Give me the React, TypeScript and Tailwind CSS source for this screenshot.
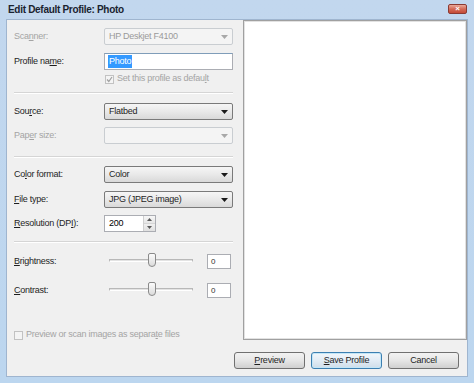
import React from 'react'

function Arrow({ disabled }: { disabled?: boolean }) {
	return (
		<svg width="7" height="4" viewBox="0 0 7 4" className="mr-[4px]">
			<path d="M0 0h7L3.5 4z" fill={disabled ? '#a8a8a8' : '#1a1a1a'} />
		</svg>
	)
}

function Select({ value, disabled }: { value?: string; disabled?: boolean }) {
	return disabled ? (
		<div className="flex h-[17px] w-[129px] items-center justify-between rounded-[2px] border border-[#c9cdd1] bg-[#f4f4f4] pl-[4px] text-[#9a9a9a]">
			<span>{value}</span>
			<Arrow disabled />
		</div>
	) : (
		<div className="flex h-[17px] w-[129px] items-center justify-between rounded-[2px] border border-[#7a7a7a] bg-gradient-to-b from-[#f6f6f6] via-[#e9e9e9] to-[#d9d9d9] pl-[4px] text-[#1e1e1e]">
			<span>{value}</span>
			<Arrow />
		</div>
	)
}

function Label({ children, disabled }: { children: React.ReactNode; disabled?: boolean }) {
	return (
		<div className={`w-[90px] ${disabled ? 'text-[#a4a4a4]' : 'text-[#1e1e1e]'}`}>
			{children}
		</div>
	)
}

function Separator({ className }: { className: string }) {
	return (
		<div className={`w-[219px] border-t border-b border-t-[#d5d5d5] border-b-white ${className}`} />
	)
}

function Slider() {
	return (
		<div className="flex h-[15px] items-start">
			<div className="relative ml-[5px] mt-[5px] h-[3px] w-[84px] border border-[#b8b8b8] border-b-white bg-[#e3e3e3]">
				<div className="absolute left-[38px] top-[-7px] h-[14px] w-[8px] rounded-b-[4px] rounded-t-[2px] border border-[#8a8a8a] bg-gradient-to-b from-[#fbfbfb] to-[#dcdcdc]" />
			</div>
			<div className="ml-[14px] flex h-[15px] w-[24px] items-center border border-[#abadb3] bg-white pl-[3px] text-[8px] text-[#333]">
				0
			</div>
		</div>
	)
}

function Button({ children, focused }: { children: React.ReactNode; focused?: boolean }) {
	return (
		<div
			className={`flex h-[17px] w-[71px] items-center justify-center rounded-[3px] border text-[#1e1e1e] ${
				focused
					? 'border-[#3c7fb1] bg-gradient-to-b from-[#f2f7fb] via-[#e2ecf5] to-[#cfdde9] shadow-[inset_0_0_0_1px_#c3e6f7]'
					: 'border-[#707070] bg-gradient-to-b from-[#f2f2f2] via-[#e6e6e6] to-[#d0d0d0]'
			}`}
		>
			{children}
		</div>
	)
}

export default function App() {
	return (
		<div className="flex h-[383px] w-[474px] flex-col bg-gradient-to-b from-[#c2d7ee] to-[#bcd6ef] font-['Liberation_Sans',sans-serif] text-[9px] tracking-[-0.25px]">
			<div className="flex h-[19px] items-center justify-between pl-[8px] pr-[7px]">
				<span className="text-[10px] font-bold tracking-[-0.3px] text-[#1a2330]">
					Edit Default Profile: Photo
				</span>
				<div className="mb-[2px] flex h-[10px] w-[19px] items-center justify-center rounded-[2px] border border-[#8b3a32] bg-gradient-to-b from-[#e9a99a] via-[#d46a57] to-[#c44a36] text-[8px] font-bold leading-none text-white">
					×
				</div>
			</div>
			<div className="mx-[6px] mb-[6px] flex flex-1 flex-col border border-[#9fb5cf] bg-[#f0f0f0]">
				<div className="flex">
					<div className="flex w-[235px] flex-col pl-[7px]">
						<div className="mt-[8px] flex items-center">
							<Label disabled>
								Sca<u>n</u>ner:
							</Label>
							<Select value="HP Deskjet F4100" disabled />
						</div>
						<div className="mt-[8px] flex items-center">
							<Label>
								Profile na<u>m</u>e:
							</Label>
							<div className="flex h-[17px] w-[129px] items-center border border-[#abadb3] border-t-[#7f9db9] bg-white pl-[3px]">
								<span className="bg-[#3399ff] px-[1px] text-white">Photo</span>
							</div>
						</div>
						<div className="mt-[4px] flex h-[10px] items-center pl-[91px] text-[#a4a4a4]">
							<div className="mr-[3px] flex h-[9px] w-[9px] items-center justify-center border border-[#c2c2c2] bg-[#f4f4f4]">
								<svg width="7" height="7" viewBox="0 0 7 7">
									<path d="M1 3.5l1.8 2L6 1" fill="none" stroke="#a0a0a0" strokeWidth="1.2" />
								</svg>
							</div>
							Set this profile as defau<u>l</u>t
						</div>
						<Separator className="mt-[8px]" />
						<div className="mt-[9px] flex items-center">
							<Label>
								Sou<u>r</u>ce:
							</Label>
							<Select value="Flatbed" />
						</div>
						<div className="mt-[7px] flex items-center">
							<Label disabled>
								Pap<u>e</u>r size:
							</Label>
							<Select disabled />
						</div>
						<Separator className="mt-[12px]" />
						<div className="mt-[8px] flex items-center">
							<Label>
								Co<u>l</u>or format:
							</Label>
							<Select value="Color" />
						</div>
						<div className="mt-[8px] flex items-center">
							<Label>
								<u>F</u>ile type:
							</Label>
							<Select value="JPG (JPEG image)" />
						</div>
						<div className="mt-[7px] flex items-center">
							<Label>
								<u>R</u>esolution (DP<u>I</u>):
							</Label>
							<div className="flex h-[17px] w-[52px] items-center justify-between border border-[#abadb3] bg-white pl-[4px]">
								<span>200</span>
								<div className="flex h-full w-[12px] flex-col border-l border-[#d0d0d0]">
									<div className="flex flex-1 items-center justify-center bg-gradient-to-b from-[#f7f7f7] to-[#e6e6e6]">
										<svg width="5" height="3" viewBox="0 0 5 3">
											<path d="M0 3h5L2.5 0z" fill="#5a5a5a" />
										</svg>
									</div>
									<div className="flex flex-1 items-center justify-center border-t border-[#d6d6d6] bg-gradient-to-b from-[#f0f0f0] to-[#e0e0e0]">
										<svg width="5" height="3" viewBox="0 0 5 3">
											<path d="M0 0h5L2.5 3z" fill="#5a5a5a" />
										</svg>
									</div>
								</div>
							</div>
						</div>
						<Separator className="mt-[9px]" />
						<div className="mt-[11px] flex items-center">
							<Label>
								<u>B</u>rightness:
							</Label>
							<Slider />
						</div>
						<div className="mt-[14px] flex items-center">
							<Label>
								<u>C</u>ontrast:
							</Label>
							<Slider />
						</div>
						<div className="mt-[32px] flex h-[10px] items-center text-[#a4a4a4]">
							<div className="mr-[3px] h-[9px] w-[9px] border border-[#c2c2c2] bg-[#f4f4f4]" />
							Preview or scan images as separa<u>t</u>e files
						</div>
					</div>
					<div className="ml-[1px] h-[320px] w-[224px] border border-[#a0a0a0] bg-white shadow-[inset_0_0_0_1px_#e2e2e2]" />
				</div>
				<div className="mt-[12px] flex justify-end gap-[6px] pr-[8px]">
					<Button>
						<u>P</u>review
					</Button>
					<Button focused>
						<u>S</u>ave Profile
					</Button>
					<Button>Cancel</Button>
				</div>
			</div>
		</div>
	)
}
